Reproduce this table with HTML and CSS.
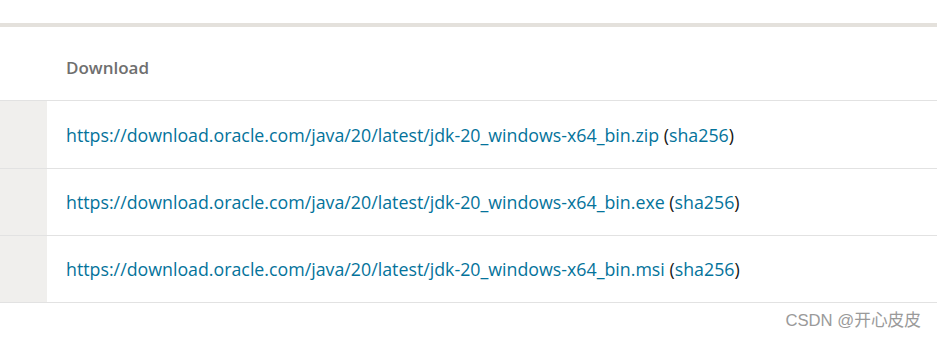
FILE: index.html
```html
<!DOCTYPE html>
<html>
<head>
<meta charset="utf-8">
<link rel="stylesheet" href="styles.css">
</head>
<body>
<div class="page">
  <div class="topband"></div>
  <div class="table">
    <div class="head">
      <div class="side"></div>
      <div class="cell th">Download</div>
    </div>
    <div class="row first">
      <div class="side gray"></div>
      <div class="cell"><a href="#">https://download.oracle.com/java/20/latest/jdk-20_windows-x64_bin.zip</a> (<a href="#">sha256</a>)</div>
    </div>
    <div class="row">
      <div class="side gray"></div>
      <div class="cell"><a href="#">https://download.oracle.com/java/20/latest/jdk-20_windows-x64_bin.exe</a> (<a href="#">sha256</a>)</div>
    </div>
    <div class="row">
      <div class="side gray"></div>
      <div class="cell"><a href="#">https://download.oracle.com/java/20/latest/jdk-20_windows-x64_bin.msi</a> (<a href="#">sha256</a>)</div>
    </div>
  </div>
  <div class="watermark">CSDN @开心皮皮</div>
</div>
</body>
</html>
```
FILE: styles.css
```css
html, body {
  margin: 0;
  padding: 0;
  background: #fff;
}
.page {
  position: relative;
  width: 937px;
  height: 337px;
  padding-top: 23px;
  box-sizing: border-box;
  font-family: "Open Sans", "Noto Sans", sans-serif;
  font-size: 17.8px;
  color: #161513;
}
.topband {
  height: 4px;
  background: #e4e1dc;
}
.table {
  display: flex;
  flex-direction: column;
}
.head, .row {
  display: flex;
  border-bottom: 1px solid #e2e2e2;
}
.head {
  height: 73px;
}
.row {
  height: 66px;
}
.row.first {
  height: 67px;
}
.side {
  width: 47px;
  flex: none;
}
.side.gray {
  background: #f0efed;
}
.cell {
  display: flex;
  align-items: center;
  padding-left: 19px;
  white-space: pre;
}
.th {
  font-size: 17px;
  font-weight: 600;
  color: #6f6f6f;
  padding-top: 7px;
  box-sizing: border-box;
}
a {
  color: #04739b;
  text-decoration: none;
}
.watermark {
  position: absolute;
  right: 16px;
  top: 307px;
  font-family: "Liberation Sans", "Noto Sans CJK SC", sans-serif;
  font-size: 16.7px;
  color: #9a9a9a;
}
```
